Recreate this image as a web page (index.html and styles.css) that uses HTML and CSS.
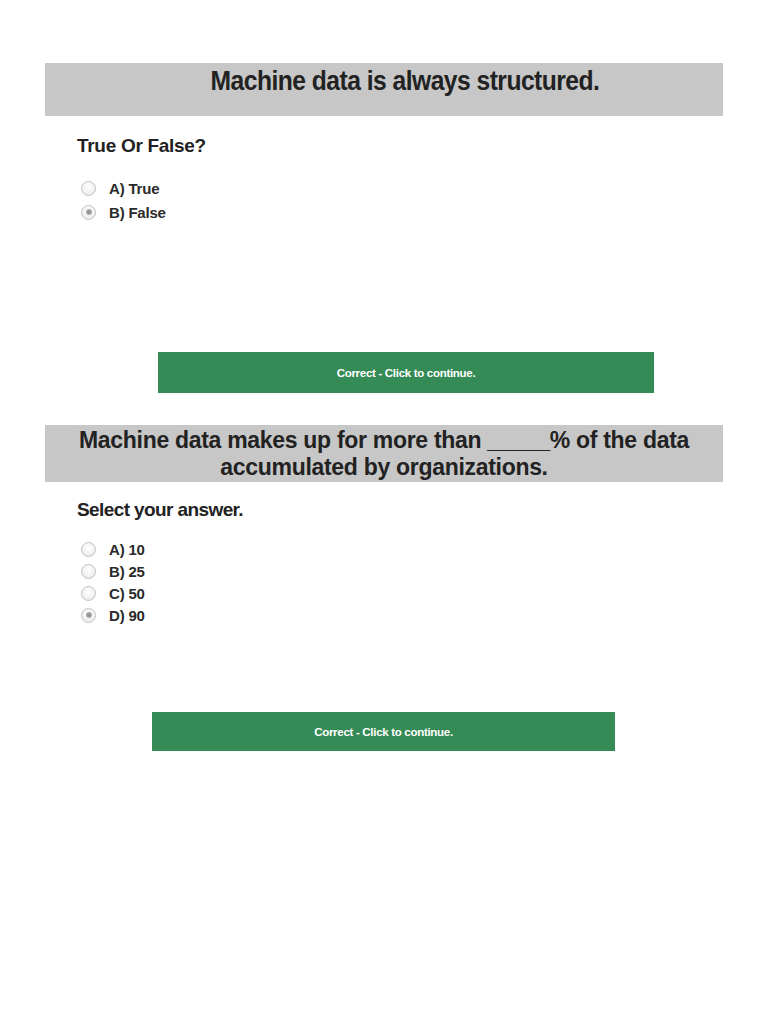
FILE: index.html
```html
<!DOCTYPE html>
<html>
<head>
<meta charset="utf-8">
<link rel="stylesheet" href="styles.css">
</head>
<body>
<div class="page">
  <section class="quiz quiz-one">
    <div class="banner banner-one"><h1>Machine data is always structured.</h1></div>
    <h2 class="prompt">True Or False?</h2>
    <ul class="options">
      <li><span class="radio"></span><span class="label">A) True</span></li>
      <li><span class="radio checked"></span><span class="label">B) False</span></li>
    </ul>
    <div class="btn btn-one">Correct - Click to continue.</div>
  </section>
  <section class="quiz quiz-two">
    <div class="banner banner-two"><h1>Machine data makes up for more than _____% of the data<br>accumulated by organizations.</h1></div>
    <h2 class="prompt">Select your answer.</h2>
    <ul class="options">
      <li><span class="radio"></span><span class="label">A) 10</span></li>
      <li><span class="radio"></span><span class="label">B) 25</span></li>
      <li><span class="radio"></span><span class="label">C) 50</span></li>
      <li><span class="radio checked"></span><span class="label">D) 90</span></li>
    </ul>
    <div class="btn btn-two">Correct - Click to continue.</div>
  </section>
</div>
</body>
</html>
```

FILE: styles.css
```css
html, body {
  margin: 0;
  padding: 0;
  background: #ffffff;
}
body {
  font-family: "Liberation Sans", Arial, sans-serif;
  color: #222222;
  width: 768px;
  height: 1024px;
}
.page {
  padding-top: 63px;
}
.quiz {
  display: flex;
  flex-direction: column;
}
.banner {
  margin-left: 45px;
  width: 678px;
  background: #c7c7c7;
  box-sizing: border-box;
}
.banner h1 {
  margin: 0;
  font-weight: 700;
  color: #222;
  text-align: center;
}
.banner-one {
  height: 53px;
  padding: 2px 0 0 42px;
}
.banner-one h1 {
  font-size: 28px;
  line-height: 32px;
  letter-spacing: -0.6px;
  transform: scaleX(0.88);
}
.banner-two {
  height: 57px;
  padding-top: 2px;
}
.banner-two h1 {
  font-size: 23px;
  line-height: 26.5px;
  letter-spacing: -0.3px;
}
.prompt {
  margin: 0 0 0 77px;
  font-size: 19px;
  font-weight: 700;
  letter-spacing: -0.3px;
  color: #222;
}
.quiz-one .prompt {
  margin-top: 18px;
  line-height: 24px;
}
.quiz-two .prompt {
  margin-top: 16px;
  line-height: 24px;
  letter-spacing: -0.6px;
}
.options {
  list-style: none;
  margin: 0;
  padding: 0 0 0 81px;
  display: flex;
  flex-direction: column;
}
.quiz-one .options {
  margin-top: 21px;
  gap: 6px;
}
.quiz-two .options {
  margin-top: 18px;
  gap: 4px;
}
.options li {
  display: flex;
  align-items: center;
  height: 18px;
}
.radio {
  width: 15px;
  height: 15px;
  border-radius: 50%;
  border: 1px solid #c2c2c2;
  background: radial-gradient(circle at 50% 40%, #ffffff 0%, #f4f4f4 50%, #dedede 100%);
  box-sizing: border-box;
  position: relative;
  flex: none;
}
.radio.checked::after {
  content: "";
  position: absolute;
  left: 3.5px;
  top: 3.5px;
  width: 6px;
  height: 6px;
  border-radius: 50%;
  background: radial-gradient(circle, #8a8a8a 0%, #a8a8a8 60%, #c8c8c8 100%);
}
.label {
  margin-left: 13px;
  font-size: 15px;
  font-weight: 700;
  color: #2a2a2a;
  letter-spacing: -0.2px;
}
.btn {
  background: #358b56;
  color: #ffffff;
  font-size: 11.5px;
  font-weight: 700;
  letter-spacing: -0.3px;
  display: flex;
  align-items: center;
  justify-content: center;
  box-sizing: border-box;
}
.btn-one {
  margin: 131px 0 0 158px;
  width: 496px;
  height: 41px;
}
.btn-two {
  margin: 88px 0 0 152px;
  width: 463px;
  height: 39px;
}
.quiz-two {
  margin-top: 32px;
}
```
